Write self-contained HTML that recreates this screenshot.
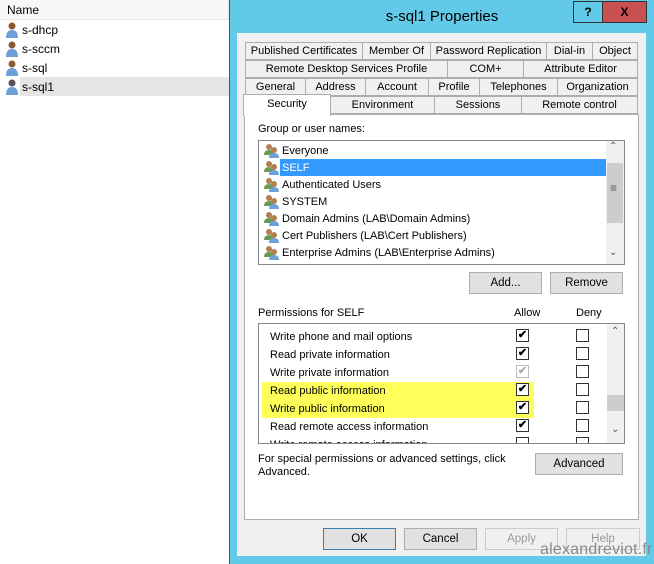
<!DOCTYPE html><html><head><style>
*{box-sizing:border-box;margin:0;padding:0}
body{width:654px;height:564px;overflow:hidden;background:#fff;font-family:"Liberation Sans",sans-serif;font-size:11px;color:#000;position:relative}
.a{position:absolute}
.tab{position:absolute;height:18px;background:#f0f0f0;border:1px solid #adadad;text-align:center;line-height:16px;white-space:nowrap}
.btn{position:absolute;height:22px;background:#e1e1e1;border:1px solid #adadad;text-align:center;line-height:20px;font-size:11.5px}
.cb{position:absolute;width:13px;height:13px;border:1px solid #333;background:#fff;font-size:11px;line-height:11px;text-align:center;font-weight:bold}
.row{position:absolute;left:22px;height:19px;line-height:19px;font-size:12px}
</style></head><body>
<div class="a" style="left:0;top:0;width:229px;height:20px;background:#f7f7f7;border-bottom:1px solid #e5e5e5;border-right:1px solid #e5e5e5;padding-left:7px;line-height:20px;font-size:12px">Name</div>
<div class="a" style="left:20px;top:77px;width:209px;height:19px;background:#e5e5e5"></div>
<svg class="a" style="left:5px;top:22px" width="14" height="76" viewBox="0 0 14 76">
<g id="u"><circle cx="7" cy="4" r="3.5" fill="#8a5a30"/><path d="M1 16 Q1 8 7 8 Q13 8 13 16Z" fill="#6ca0d8"/></g>
<use href="#u" y="19"/><use href="#u" y="38"/><g transform="translate(0,57)"><circle cx="7" cy="4" r="3.5" fill="#555"/><path d="M1 16 Q1 8 7 8 Q13 8 13 16Z" fill="#6ca0d8"/></g></svg>
<div class="row" style="top:21px">s-dhcp</div>
<div class="row" style="top:40px">s-sccm</div>
<div class="row" style="top:59px">s-sql</div>
<div class="row" style="top:78px">s-sql1</div>

<div class="a" style="left:229px;top:0;width:425px;height:564px;background:#62c9e8;border-left:1px solid #555"></div>
<div class="a" style="left:230px;top:5px;width:424px;text-align:center;font-size:15px;line-height:24px">s-sql1 Properties</div>
<div class="a" style="left:573px;top:1px;width:30px;height:22px;border:1px solid #333;text-align:center;font-weight:bold;font-size:12px;line-height:20px">?</div>
<div class="a" style="left:602px;top:1px;width:45px;height:22px;background:#c75050;border:1px solid #333;text-align:center;font-weight:bold;font-size:12px;line-height:20px">X</div>
<div class="a" style="left:237px;top:33px;width:409px;height:523px;background:#f0f0f0"></div>

<div class="tab" style="left:245px;top:42px;width:118px">Published Certificates</div>
<div class="tab" style="left:362px;top:42px;width:69px">Member Of</div>
<div class="tab" style="left:430px;top:42px;width:117px">Password Replication</div>
<div class="tab" style="left:546px;top:42px;width:47px">Dial-in</div>
<div class="tab" style="left:592px;top:42px;width:46px">Object</div>
<div class="tab" style="left:245px;top:60px;width:203px">Remote Desktop Services Profile</div>
<div class="tab" style="left:447px;top:60px;width:77px">COM+</div>
<div class="tab" style="left:523px;top:60px;width:115px">Attribute Editor</div>
<div class="tab" style="left:245px;top:78px;width:61px">General</div>
<div class="tab" style="left:305px;top:78px;width:61px">Address</div>
<div class="tab" style="left:365px;top:78px;width:64px">Account</div>
<div class="tab" style="left:428px;top:78px;width:52px">Profile</div>
<div class="tab" style="left:479px;top:78px;width:79px">Telephones</div>
<div class="tab" style="left:557px;top:78px;width:81px">Organization</div>
<div class="tab" style="left:330px;top:96px;width:105px">Environment</div>
<div class="tab" style="left:434px;top:96px;width:88px">Sessions</div>
<div class="tab" style="left:521px;top:96px;width:117px">Remote control</div>
<div class="a" style="left:244px;top:114px;width:395px;height:406px;background:#fff;border:1px solid #adadad"></div>
<div class="a" style="left:243px;top:94px;width:88px;height:22px;background:#fff;border:1px solid #adadad;border-bottom:none;text-align:center;line-height:18px">Security</div>

<div class="a" style="left:258px;top:123px">Group or user names:</div>
<div class="a" style="left:258px;top:140px;width:367px;height:125px;border:1px solid #828790;background:#fff;overflow:hidden">
<div class="a" style="left:21px;top:18px;width:327px;height:17px;background:#3399ff"></div>
<div class="a" style="left:347px;top:0;width:18px;height:123px;background:#f0f0f0"></div>
<div class="a" style="left:348px;top:22px;width:16px;height:60px;background:#cdcdcd"></div>
<div class="a" style="left:350px;top:0;font-size:10px;color:#555">&#8963;</div>
<div class="a" style="left:350px;top:106px;font-size:10px;color:#555">&#8964;</div>
<div class="a" style="left:351px;top:40px;font-size:12px;color:#555">&#8801;</div>
<svg class="a" style="left:5px;top:2px" width="16" height="125">
<g id="g"><circle cx="5" cy="4" r="3" fill="#b08050"/><path d="M0 12Q0 7 5 7Q10 7 10 12Z" fill="#6a9a50"/><circle cx="10" cy="7" r="3" fill="#b08050"/><path d="M5 15Q5 10 10 10Q15 10 15 15Z" fill="#6ca0d8"/></g>
<use href="#g" y="17"/><use href="#g" y="34"/><use href="#g" y="51"/><use href="#g" y="68"/><use href="#g" y="85"/><use href="#g" y="102"/></svg>
<div class="a" style="left:23px;top:2px;line-height:17px">Everyone</div>
<div class="a" style="left:23px;top:19px;line-height:17px;color:#fff">SELF</div>
<div class="a" style="left:23px;top:36px;line-height:17px">Authenticated Users</div>
<div class="a" style="left:23px;top:53px;line-height:17px">SYSTEM</div>
<div class="a" style="left:23px;top:70px;line-height:17px">Domain Admins (LAB\Domain Admins)</div>
<div class="a" style="left:23px;top:87px;line-height:17px">Cert Publishers (LAB\Cert Publishers)</div>
<div class="a" style="left:23px;top:104px;line-height:17px">Enterprise Admins (LAB\Enterprise Admins)</div>
</div>
<div class="btn" style="left:469px;top:272px;width:73px">Add...</div>
<div class="btn" style="left:550px;top:272px;width:73px">Remove</div>

<div class="a" style="left:258px;top:307px">Permissions for SELF</div>
<div class="a" style="left:514px;top:307px">Allow</div>
<div class="a" style="left:576px;top:307px">Deny</div>
<div class="a" style="left:258px;top:323px;width:367px;height:121px;border:1px solid #828790;background:#fff;overflow:hidden">
<div class="a" style="left:3px;top:58px;width:272px;height:36px;background:#ffff5a"></div>
<div class="a" style="left:348px;top:0;width:18px;height:119px;background:#f0f0f0"></div>
<div class="a" style="left:348px;top:71px;width:17px;height:16px;background:#cdcdcd"></div>
<div class="a" style="left:352px;top:2px;font-size:10px;color:#555">&#8963;</div>
<div class="a" style="left:352px;top:100px;font-size:10px;color:#555">&#8964;</div>
<div class="a" style="left:11px;top:4px;line-height:18px">Write phone and mail options<br>Read private information<br>Write private information<br>Read public information<br>Write public information<br>Read remote access information<br>Write remote access information</div>
<div class="cb" style="left:257px;top:5px">✔</div><div class="cb" style="left:317px;top:5px"></div>
<div class="cb" style="left:257px;top:23px">✔</div><div class="cb" style="left:317px;top:23px"></div>
<div class="cb" style="left:257px;top:41px;color:#aaa;border-color:#bbb">✔</div><div class="cb" style="left:317px;top:41px"></div>
<div class="cb" style="left:257px;top:59px">✔</div><div class="cb" style="left:317px;top:59px"></div>
<div class="cb" style="left:257px;top:77px">✔</div><div class="cb" style="left:317px;top:77px"></div>
<div class="cb" style="left:257px;top:95px">✔</div><div class="cb" style="left:317px;top:95px"></div>
<div class="cb" style="left:257px;top:113px"></div><div class="cb" style="left:317px;top:113px"></div>
</div>
<div class="a" style="left:258px;top:453px;line-height:13px">For special permissions or advanced settings, click<br>Advanced.</div>
<div class="btn" style="left:535px;top:453px;width:88px">Advanced</div>

<div class="btn" style="left:323px;top:528px;width:73px;border-color:#3c7fb1">OK</div>
<div class="btn" style="left:404px;top:528px;width:73px">Cancel</div>
<div class="btn" style="left:485px;top:528px;width:73px;background:#f0f0f0;border-color:#ccc;color:#999">Apply</div>
<div class="btn" style="left:566px;top:528px;width:74px;background:#f0f0f0;border-color:#ccc;color:#999">Help</div>
<div class="a" style="left:540px;top:541px;font-size:16px;color:#888;line-height:18px;letter-spacing:0.2px">alexandreviot.fr</div>
</body></html>
